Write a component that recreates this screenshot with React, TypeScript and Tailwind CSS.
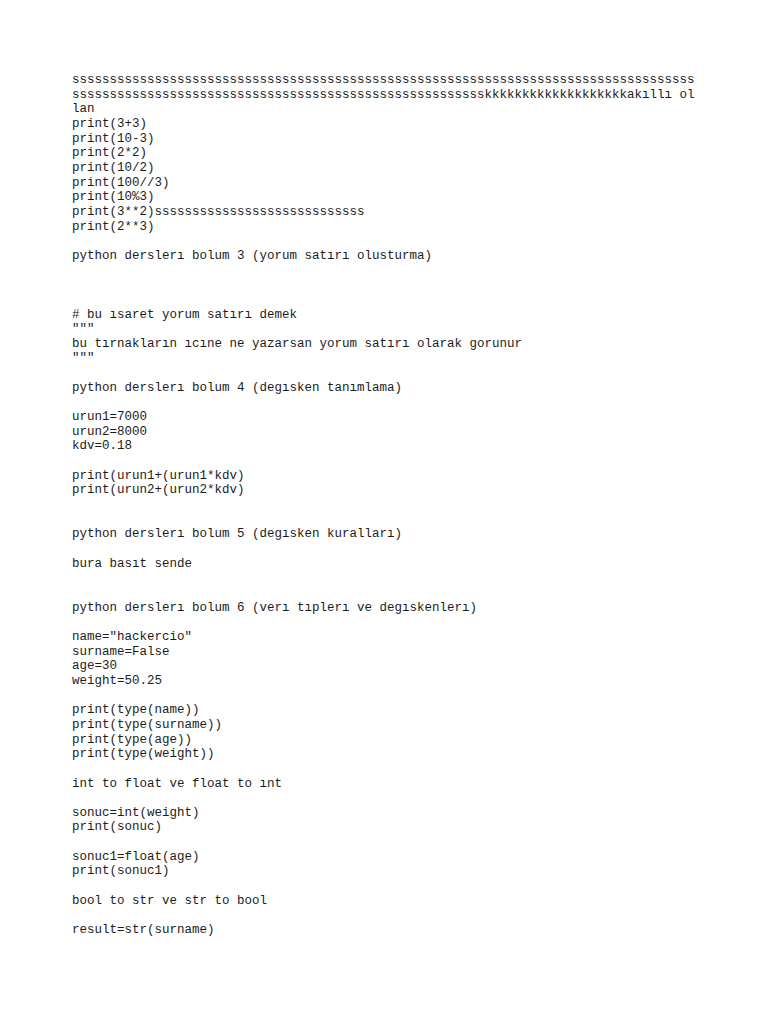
import React from 'react';

const s = (n: number) => 's'.repeat(n);
const k = (n: number) => 'k'.repeat(n);

const lines: string[] = [
  s(83),
  s(55) + k(19) + 'akıllı ol',
  'lan',
  'print(3+3)',
  'print(10-3)',
  'print(2*2)',
  'print(10/2)',
  'print(100//3)',
  'print(10%3)',
  'print(3**2)' + s(28),
  'print(2**3)',
  '',
  'python derslerı bolum 3 (yorum satırı olusturma)',
  '',
  '',
  '',
  '# bu ısaret yorum satırı demek',
  '"""',
  'bu tırnakların ıcıne ne yazarsan yorum satırı olarak gorunur',
  '"""',
  '',
  'python derslerı bolum 4 (degısken tanımlama)',
  '',
  'urun1=7000',
  'urun2=8000',
  'kdv=0.18',
  '',
  'print(urun1+(urun1*kdv)',
  'print(urun2+(urun2*kdv)',
  '',
  '',
  'python derslerı bolum 5 (degısken kuralları)',
  '',
  'bura basıt sende',
  '',
  '',
  'python derslerı bolum 6 (verı tıplerı ve degıskenlerı)',
  '',
  'name="hackercio"',
  'surname=False',
  'age=30',
  'weight=50.25',
  '',
  'print(type(name))',
  'print(type(surname))',
  'print(type(age))',
  'print(type(weight))',
  '',
  'int to float ve float to ınt',
  '',
  'sonuc=int(weight)',
  'print(sonuc)',
  '',
  'sonuc1=float(age)',
  'print(sonuc1)',
  '',
  'bool to str ve str to bool',
  '',
  'result=str(surname)',
];

const App: React.FC = () => {
  return (
    <div className="min-h-[1024px] w-[768px] bg-white">
      <pre className="pl-[72px] pt-[73px] font-['Liberation_Mono',monospace] text-[12.5px] leading-[14.67px] text-[#1c1c1c] whitespace-pre">
        {lines.map((l, i) => (
          <div key={i} className="h-[14.67px]">
            {l}
          </div>
        ))}
      </pre>
    </div>
  );
};

export default App;
